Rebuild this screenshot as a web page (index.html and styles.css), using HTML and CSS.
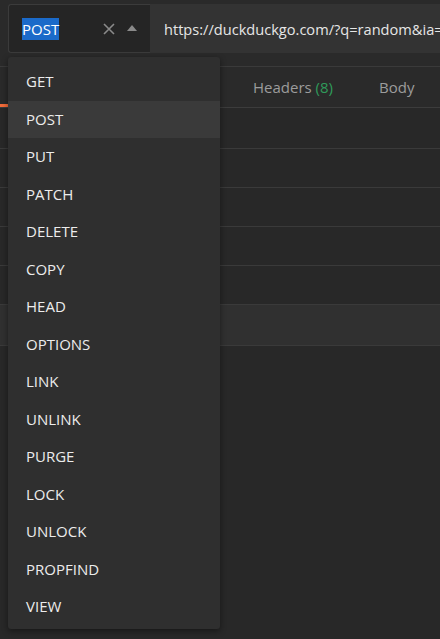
FILE: index.html
```html
<!DOCTYPE html>
<html lang="en">
<head>
    <meta charset="UTF-8">
    <meta name="viewport" content="width=device-width, initial-scale=1.0">
    <title>Request</title>
    <link rel="stylesheet" href="styles.css">
</head>
<body>
    <div class="url-bar">
        <div class="method-select">
            <span class="method-value"><span class="selected-text">POST</span></span>
            <svg class="clear-icon" width="12" height="12" viewBox="0 0 12 12">
                <path d="M1 1 L11 11 M11 1 L1 11" stroke="#8a8a8a" stroke-width="1.6" fill="none"/>
            </svg>
            <svg class="arrow-icon" width="10" height="6" viewBox="0 0 10 6">
                <path d="M0 6 L5 0 L10 6 Z" fill="#8a8a8a"/>
            </svg>
        </div>
        <div class="url-input">https://duckduckgo.com/?q=random&amp;ia=web</div>
    </div>

    <!-- Params / Authorization tabs sit under the open menu -->
    <div class="tabs">
        <div class="tab">Headers <span class="count">(8)</span></div>
        <div class="tab">Body</div>
    </div>

    <div class="rows">
        <div class="row"></div>
        <div class="row"></div>
        <div class="row"></div>
        <div class="row"></div>
        <div class="row"></div>
        <div class="row light"></div>
    </div>

    <ul class="method-menu">
        <li>GET</li>
        <li class="hover">POST</li>
        <li>PUT</li>
        <li>PATCH</li>
        <li>DELETE</li>
        <li>COPY</li>
        <li>HEAD</li>
        <li>OPTIONS</li>
        <li>LINK</li>
        <li>UNLINK</li>
        <li>PURGE</li>
        <li>LOCK</li>
        <li>UNLOCK</li>
        <li>PROPFIND</li>
        <li>VIEW</li>
    </ul>
</body>
</html>
```

FILE: styles.css
```css
body {
    margin: 0;
    background-color: #282828;
    font-family: 'Open Sans', 'Noto Sans', sans-serif;
    font-size: 15px;
    color: #e6e6e6;
    height: 639px;
    overflow: hidden;
    position: relative;
}

.url-bar {
    display: flex;
    padding: 4px 0 13px 8px;
    background-color: #2a2a2a;
    border-bottom: 1px solid #3a3a3a;
}

.method-select {
    width: 142px;
    height: 49px;
    box-sizing: border-box;
    display: flex;
    align-items: center;
    padding-left: 13px;
    background-color: #252525;
    border: 1px solid #3b3b3b;
    border-right: none;
    border-radius: 3px 0 0 3px;
}

.method-value {
    flex: 1;
}

.selected-text {
    background-color: #1b6ac9;
    color: #fff;
    padding: 1px 0;
}

.clear-icon {
    margin-right: 12px;
}

.arrow-icon {
    margin-right: 13px;
    margin-top: -2px;
}

.url-input {
    flex: 1;
    height: 49px;
    display: flex;
    align-items: center;
    padding-left: 14px;
    background-color: #333333;
    color: #e6e6e6;
    font-size: 14.6px;
    white-space: nowrap;
    overflow: hidden;
}

.tabs {
    display: flex;
    height: 40px;
    align-items: center;
    background-color: #2a2a2a;
    border-bottom: 1px solid #3c3c3c;
    padding-left: 253px;
    position: relative;
}

.tabs::before {
    content: '';
    position: absolute;
    left: 0;
    bottom: 0;
    width: 30px;
    height: 3px;
    background-color: #f26b3a;
}

.tab {
    color: #9c9c9c;
    margin-right: 46px;
    white-space: nowrap;
}

.tab .count {
    color: #2f9a5a;
}

.rows {
    display: flex;
    flex-direction: column;
}

.row {
    height: 38px;
    border-bottom: 1px solid #3a3a3a;
    background-color: #282828;
}

.row:first-child {
    height: 40px;
}

.row.light {
    height: 40px;
    background-color: #303030;
}

.method-menu {
    list-style: none;
    margin: 0;
    padding: 6px 0 3px;
    position: absolute;
    top: 57px;
    left: 8px;
    width: 212px;
    background-color: #2f2f2f;
    border-radius: 3px;
    box-shadow: 0 2px 6px rgba(0, 0, 0, 0.45);
}

.method-menu li {
    height: 37.5px;
    line-height: 37.5px;
    padding-left: 18px;
    color: #ececec;
}

.method-menu li.hover {
    background-color: #3a3a3a;
}
```
